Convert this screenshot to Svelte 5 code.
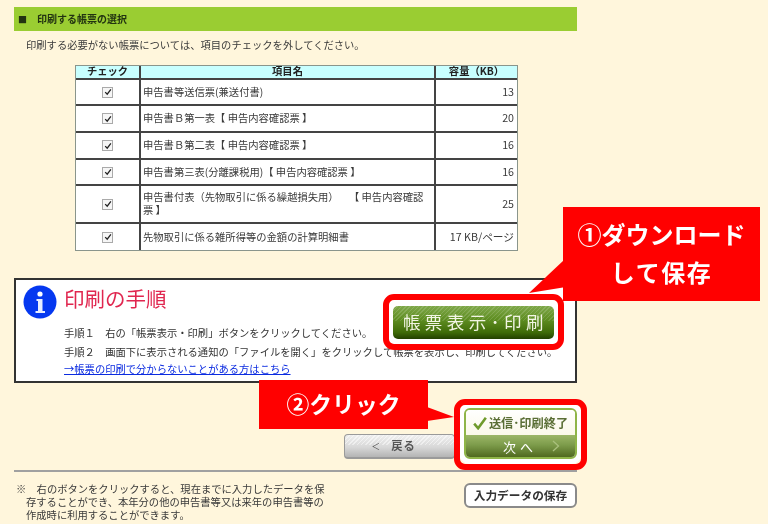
<script>
    // Rows of the form list
    const rows = [
        { name: '申告書等送信票(兼送付書)', size: '13', h: 26 },
        { name: '申告書Ｂ第一表【 申告内容確認票 】', size: '20', h: 27 },
        { name: '申告書Ｂ第二表【 申告内容確認票 】', size: '16', h: 27 },
        { name: '申告書第三表(分離課税用)【 申告内容確認票 】', size: '16', h: 26 },
        { name: '申告書付表（先物取引に係る繰越損失用）　　【 申告内容確認票 】', size: '25', h: 38 },
        { name: '先物取引に係る雑所得等の金額の計算明細書', size: '17 KB/ページ', h: 28 }
    ];
</script>

<div class="page">
    <h2 class="bar"><span class="mark">■</span>印刷する帳票の選択</h2>
    <p class="intro">印刷する必要がない帳票については、項目のチェックを外してください。</p>

    <table>
        <thead>
            <tr>
                <th class="c1">チェック</th>
                <th class="c2">項目名</th>
                <th class="c3">容量（KB）</th>
            </tr>
        </thead>
        <tbody>
            {#each rows as row}
                <tr style="height: {row.h}px">
                    <td class="chk">
                        <span class="box">
                            <svg viewBox="0 0 10 10" width="8" height="8"><path d="M1.5 5.2 4 7.8 8.6 1.8" fill="none" stroke="#222" stroke-width="1.6" /></svg>
                        </span>
                    </td>
                    <td>{row.name}</td>
                    <td class="num">{row.size}</td>
                </tr>
            {/each}
        </tbody>
    </table>

    <section class="info">
        <svg class="info-icon" viewBox="0 0 34 34" width="34" height="34">
            <circle cx="17" cy="17" r="16.5" fill="#0538f0" />
            <circle cx="17" cy="9" r="2.6" fill="#fff" />
            <path d="M13.5 14h6v12h2.5v2H12.5v-2H15V16h-1.5z" fill="#e8eeff" />
        </svg>
        <div class="info-body">
            <h3>印刷の手順</h3>
            <p class="step first">手順１　右の「帳票表示・印刷」ボタンをクリックしてください。</p>
            <p class="step">手順２　画面下に表示される通知の「ファイルを開く」をクリックして帳票を表示し、印刷してください。</p>
            <a href="#help">→帳票の印刷で分からないことがある方はこちら</a>
        </div>
    </section>

    <div class="actions">
        <button class="back"><span class="lt">＜</span>戻る</button>
        <button class="finish">
            <span class="finish-top">
                <svg viewBox="0 0 12 12" width="14" height="14"><path d="M1 6.5 4.4 10.5 11 1.5" fill="none" stroke="#6f9a2c" stroke-width="2.2" /></svg>
                送信･印刷終了
            </span>
            <span class="finish-next">次へ<svg viewBox="0 0 8 12" width="8" height="12"><path d="M1 1l5.5 5L1 11" fill="none" stroke="#a9c07d" stroke-width="1.3" /></svg></span>
        </button>
    </div>

    <hr />

    <div class="foot">
        <p class="note">※　右のボタンをクリックすると、現在までに入力したデータを保<br />存することができ、本年分の他の申告書等又は来年の申告書等の<br />作成時に利用することができます。</p>
        <button class="save">入力データの保存</button>
    </div>

    <!-- Annotations drawn over the page -->
    <svg class="tails" viewBox="0 0 768 524" width="768" height="524">
        <polygon points="529,293 564,260 566,287" fill="#f00" />
        <polygon points="454,417 427,407 427,421" fill="#f00" />
    </svg>
    <div class="callout one">①ダウンロード<br /><span class="wide">して保存</span></div>
    <div class="callout two">②クリック</div>
    <div class="ring ring-one"><button class="print">帳票表示･印刷</button></div>
    <div class="ring ring-two"></div>
</div>

<style>
    :global(body) {
        background: #fff6dc;
    }

    .page {
        position: relative;
        width: 768px;
        height: 524px;
        box-sizing: border-box;
        padding: 7px 191px 0 14px;
        overflow: hidden;
        background: #fff6dc;
        color: #3a3a3a;
        font-family: "Noto Sans CJK JP", sans-serif;
        font-size: 10.3px;
        filter: blur(0.45px);
    }

    p, h2, h3 {
        margin: 0;
    }

    .bar {
        height: 24px;
        line-height: 23px;
        padding-left: 4px;
        background: #9acd32;
        color: #223311;
        font-size: 10px;
        font-weight: 700;
    }

    .mark {
        display: inline-block;
        width: 19px;
        font-size: 9px;
    }

    .intro {
        margin: 6px 0 0 12px;
        line-height: 15px;
    }

    table {
        width: 443px;
        margin: 13px 0 0 61px;
        border: 1px solid #8a958c;
        border-collapse: separate;
        border-spacing: 0;
        table-layout: fixed;
        background: #fff;
        line-height: 13px;
    }

    th {
        height: 12px;
        padding: 0;
        background: #c8ffff;
        color: #222;
        font-size: 10.3px;
        font-weight: 700;
        line-height: 9px;
        vertical-align: top;
        border-left: 2px solid #444;
    }

    td {
        box-sizing: border-box;
        padding: 0 2px 2px;
        border-top: 2px solid #444;
        border-left: 2px solid #444;
    }

    th.c1, td.chk {
        border-left: 0;
    }

    .c1 {
        width: 63px;
    }

    .c3 {
        width: 81px;
    }

    td.chk {
        padding: 0 0 2px;
        text-align: center;
    }

    .box {
        display: inline-flex;
        align-items: center;
        justify-content: center;
        width: 9px;
        height: 9px;
        border: 1px solid #aaa;
        background: #f6f6f6;
        vertical-align: middle;
    }

    td.num {
        padding-right: 3px;
        font-size: 10.7px;
        text-align: right;
    }

    .info {
        display: flex;
        gap: 7px;
        box-sizing: border-box;
        height: 105px;
        margin-top: 27px;
        padding: 5px 0 0 7px;
        border: 2px solid #333;
        background: #fff;
    }

    .info-icon {
        flex: none;
    }

    h3 {
        height: 27px;
        color: #e0264f;
        font-size: 20.5px;
        font-weight: 400;
        line-height: 27px;
    }

    .step {
        line-height: 18px;
        color: #333;
    }

    .step.first {
        margin-top: 12px;
        margin-bottom: 1px;
    }

    .info a {
        display: block;
        line-height: 16px;
        color: #0b2be0;
    }

    .actions {
        display: flex;
        align-items: flex-end;
        justify-content: flex-end;
        gap: 9px;
        margin-top: 25px;
    }

    button {
        margin: 0;
        padding: 0;
        font-family: inherit;
    }

    .back {
        width: 111px;
        height: 25px;
        padding: 0 12px 2px 0;
        border: 1px solid #9a9a9a;
        border-bottom-width: 2px;
        border-radius: 4px;
        background:
            repeating-linear-gradient(135deg, rgba(255, 255, 255, 0.5) 0 1px, rgba(255, 255, 255, 0) 1px 3px) top / 100% 45% no-repeat,
            linear-gradient(#efefef, #d8d8d8 55%, #b4b4b4);
        color: #555;
        font-size: 11.3px;
        font-weight: 700;
        letter-spacing: 1px;
    }

    .lt {
        display: inline-block;
        margin-right: 10px;
        font-size: 9px;
        font-weight: 400;
    }

    .finish {
        display: flex;
        flex-direction: column;
        box-sizing: border-box;
        width: 113px;
        height: 51px;
        border: 2px solid #8fb548;
        border-radius: 6px;
        overflow: hidden;
        background: #fff;
        box-shadow: 0 0 0 5px #fff;
    }

    .finish-top {
        display: flex;
        align-items: center;
        justify-content: center;
        gap: 2px;
        height: 25px;
        width: 100%;
        background: linear-gradient(#fff, #fbf8e8);
        color: #5a6e35;
        font-size: 12.2px;
        font-weight: 700;
    }

    .finish-next {
        display: flex;
        align-items: center;
        justify-content: center;
        gap: 15px;
        flex: 1;
        width: 100%;
        padding-left: 22px;
        box-sizing: border-box;
        background: linear-gradient(#9cb667, #7d9c4b 45%, #50691f);
        color: #fff;
        font-size: 13px;
        letter-spacing: 4px;
    }

    hr {
        height: 2px;
        margin: 11px 0 0;
        border: 0;
        background: #a0a0a0;
    }

    .foot {
        display: flex;
        align-items: flex-start;
        justify-content: space-between;
    }

    .note {
        margin: 10px 0 0 2px;
        padding-left: 10px;
        text-indent: -10px;
        line-height: 13px;
        white-space: nowrap;
    }

    .save {
        box-sizing: border-box;
        width: 113px;
        height: 25px;
        margin-top: 11px;
        padding-bottom: 2px;
        border: 2px solid #8a8a8a;
        border-radius: 6px;
        background: #fff;
        color: #333;
        font-size: 11.7px;
        font-weight: 700;
    }

    .tails {
        position: absolute;
        left: 0;
        top: 0;
    }

    .callout {
        position: absolute;
        background: #f00;
        color: #fff;
        font-size: 24px;
        font-weight: 700;
        text-align: center;
    }

    .wide {
        letter-spacing: 1.5px;
    }

    .callout.one {
        left: 563px;
        top: 207px;
        width: 197px;
        height: 94px;
        padding-top: 8px;
        box-sizing: border-box;
        line-height: 38px;
    }

    .callout.two {
        left: 259px;
        top: 380px;
        width: 169px;
        height: 49px;
        font-size: 22.8px;
        line-height: 47px;
    }

    .ring {
        position: absolute;
        box-sizing: border-box;
        border: 6px solid #f00;
        border-radius: 11px;
    }

    .ring-one {
        display: flex;
        align-items: center;
        justify-content: center;
        left: 383px;
        top: 294px;
        width: 181px;
        height: 56px;
        background: #fff;
    }

    .ring-two {
        left: 454px;
        top: 399px;
        width: 133px;
        height: 71px;
    }

    .print {
        width: 161px;
        height: 33px;
        padding: 0 0 2px 4px;
        border: 0;
        border-radius: 5px;
        background:
            repeating-linear-gradient(135deg, rgba(255, 255, 255, 0.14) 0 1px, rgba(255, 255, 255, 0) 1px 3px) top / 100% 45% no-repeat,
            linear-gradient(#7fa84a, #5f8e22 40%, #3f6b08 80%, #234000);
        color: #f2f5e4;
        font-size: 17.5px;
        letter-spacing: 4.5px;
        white-space: nowrap;
    }
</style>
